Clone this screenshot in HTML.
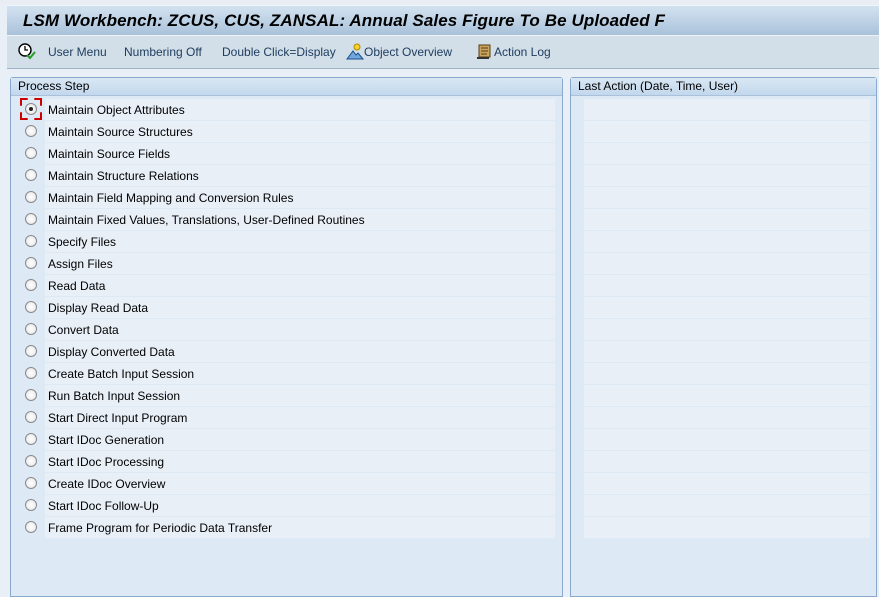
<!DOCTYPE html>
<html><head><style>
*{margin:0;padding:0;box-sizing:border-box}
body{width:879px;height:597px;overflow:hidden;background:#e9eff6;font-family:"Liberation Sans",Tahoma,sans-serif;position:relative;font-size:12px;color:#000}
#top{position:absolute;left:0;top:0;width:879px;height:5px;background:#e9eef4}
#title{position:absolute;left:7px;top:5px;width:872px;height:30px;background:linear-gradient(#d3e2f0,#a9c2da);border-top:1px solid #f0f5fa}
#title span{position:absolute;left:16px;top:5px;font-size:17px;font-weight:bold;font-style:italic;color:#000;letter-spacing:0.1px}
#tb{position:absolute;left:7px;top:35px;width:872px;height:34px;background:#d2dee8;border-top:1px solid #eef3f8;border-bottom:1px solid #9fb2c6}
.t{position:absolute;top:9px;color:#1d3c5e;font-size:12px}
.panel{position:absolute;top:77px;height:520px;background:#dde9f5;border:1px solid #88a9cc;border-radius:3px 3px 0 0}
.ph{height:18px;background:linear-gradient(#d9e7f4,#c3d8ed);border-bottom:1px solid #a9c1da;padding-left:7px;line-height:17px;font-size:12px}
.row{position:absolute;height:21px;background:#e8eff7;line-height:22px;padding-left:3px}
.rad{position:absolute;width:12px;height:12px;border-radius:50%;border:1px solid #8a8a8a;background:radial-gradient(#fff,#e4e4e4)}
</style></head><body>
<div id="top"></div>
<div id="title"><span>LSM Workbench: ZCUS, CUS, ZANSAL: Annual Sales Figure To Be Uploaded F</span></div>
<div id="tb">
<svg style="position:absolute;left:11px;top:7px" width="18" height="17" viewBox="0 0 18 17"><circle cx="7" cy="7" r="6" fill="#fff" stroke="#000" stroke-width="1.4"/><path d="M7 3v4h3" stroke="#000" fill="none" stroke-width="1.3"/><path d="M9 12l3 3 5-6" stroke="#2a9a2a" fill="none" stroke-width="2"/></svg>
<span class="t" style="left:41px">User Menu</span>
<span class="t" style="left:117px">Numbering Off</span>
<span class="t" style="left:215px">Double Click=Display</span>
<svg style="position:absolute;left:339px;top:7px" width="18" height="17" viewBox="0 0 18 17"><circle cx="11" cy="4" r="3" fill="#f6d22a" stroke="#b08a00"/><path d="M1 16l6-8 3 4 2-2 5 6z" fill="#6fa8dc" stroke="#1c4c8c"/></svg>
<span class="t" style="left:357px">Object Overview</span>
<svg style="position:absolute;left:469px;top:7px" width="17" height="17" viewBox="0 0 17 17"><rect x="3" y="2" width="11" height="12" fill="#c9a560" stroke="#5a3d10"/><path d="M5 5h7M5 8h7M5 11h6" stroke="#5a3d10"/><rect x="1" y="14" width="12" height="2" fill="#333"/></svg>
<span class="t" style="left:487px">Action Log</span>
</div>
<div class="panel" style="left:10px;width:553px"><div class="ph">Process Step</div></div>
<div class="panel" style="left:570px;width:307px"><div class="ph">Last Action (Date, Time, User)</div></div>
<div id="rows"></div>
<div style="position:absolute;left:20px;top:98px;width:22px;height:22px;border:2px solid #c00;clip-path:polygon(0 0,35% 0,35% 2px,2px 2px,2px 35%,0 35%,0 65%,2px 65%,2px calc(100% - 2px),35% calc(100% - 2px),35% 100%,65% 100%,65% calc(100% - 2px),calc(100% - 2px) calc(100% - 2px),calc(100% - 2px) 65%,100% 65%,100% 35%,calc(100% - 2px) 35%,calc(100% - 2px) 2px,65% 2px,65% 0,100% 0,100% 100%,0 100%)"></div>
<script>
var L=["Maintain Object Attributes","Maintain Source Structures","Maintain Source Fields","Maintain Structure Relations","Maintain Field Mapping and Conversion Rules","Maintain Fixed Values, Translations, User-Defined Routines","Specify Files","Assign Files","Read Data","Display Read Data","Convert Data","Display Converted Data","Create Batch Input Session","Run Batch Input Session","Start Direct Input Program","Start IDoc Generation","Start IDoc Processing","Create IDoc Overview","Start IDoc Follow-Up","Frame Program for Periodic Data Transfer"];
var h="";
for(var i=0;i<L.length;i++){var y=99+i*22;
h+='<div class="row" style="left:45px;top:'+y+'px;width:510px">'+L[i]+'</div>';
h+='<div class="row" style="left:584px;top:'+y+'px;width:286px"></div>';
h+='<div class="rad" style="left:25px;top:'+(y+4)+'px">'+(i==0?'<div style="width:4px;height:4px;border-radius:50%;background:#222;margin:3px"></div>':'')+'</div>';}
document.getElementById("rows").innerHTML=h;
</script>
</body></html>
